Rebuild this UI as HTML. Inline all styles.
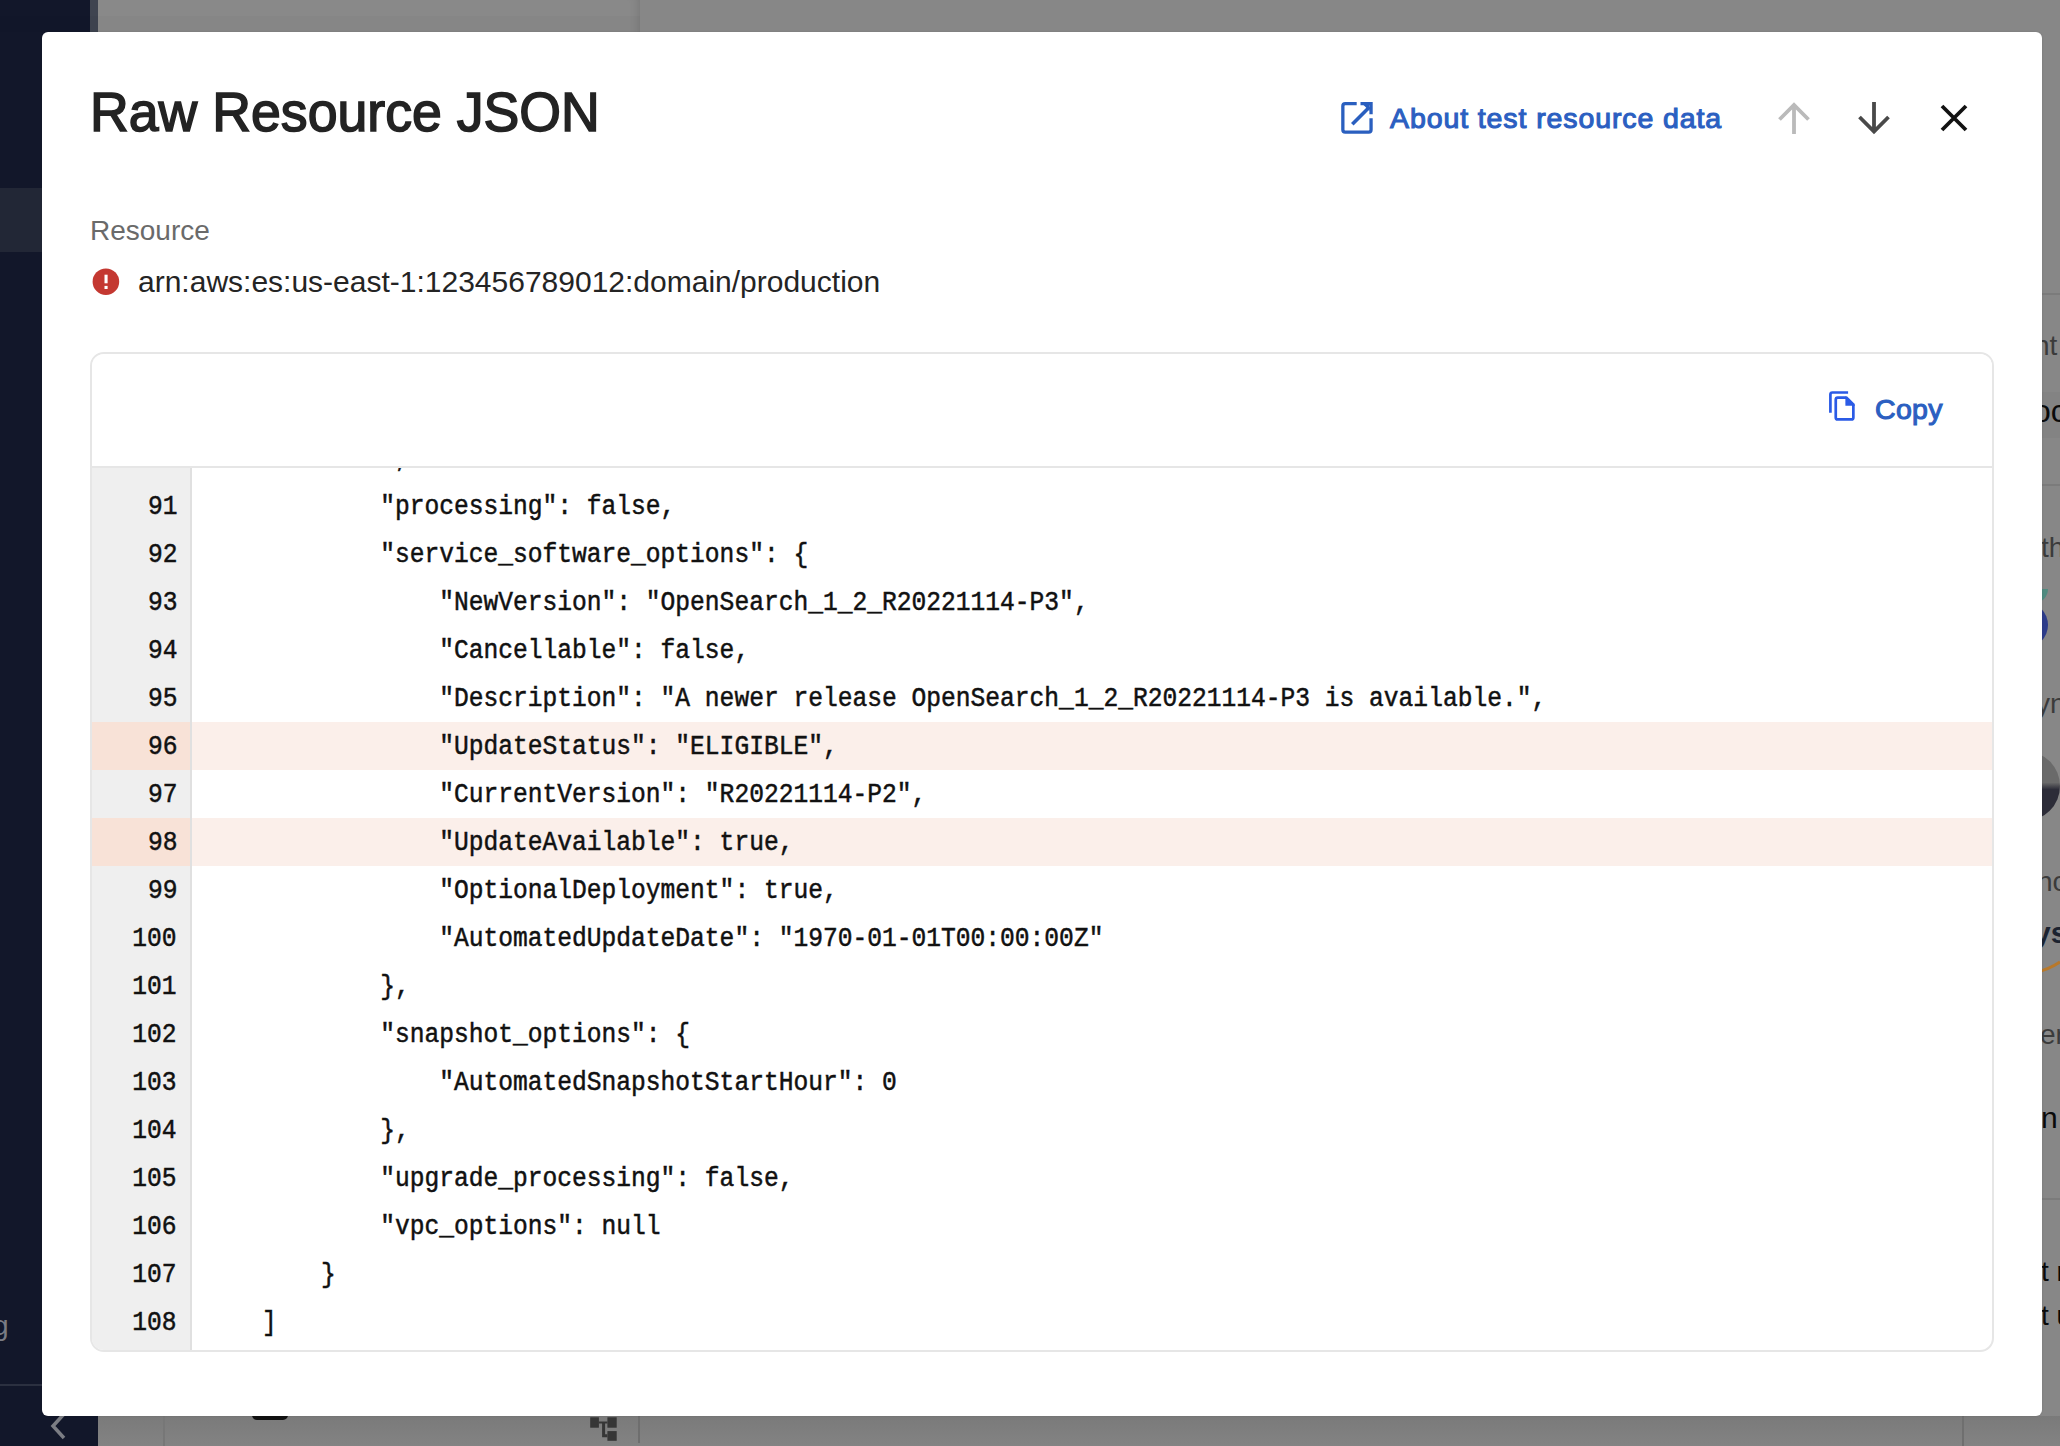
<!DOCTYPE html>
<html><head><meta charset="utf-8">
<style>
html,body{margin:0;padding:0;}
body{width:2060px;height:1446px;overflow:hidden;position:relative;background:#878787;font-family:"Liberation Sans",sans-serif;}
.abs{position:absolute;}
#side{left:0;top:0;width:98px;height:1446px;background:#12172a;}
#sidestrip{left:90px;top:0;width:8px;height:40px;background:#3f4450;}
#sidehi{left:0;top:188px;width:90px;height:64px;background:#222736;}
#sideline{left:0;top:1384px;width:98px;height:2px;background:#2b3040;}
#leftpanel{left:98px;top:0;width:542px;height:1446px;background:#898989;box-shadow:inset -10px 0 10px -8px rgba(0,0,0,0.12);}
#modal{left:42px;top:32px;width:2000px;height:1384px;background:#fff;border-radius:6px;box-shadow:0 0 2px rgba(0,0,0,0.15);}
#title{left:90px;top:79px;font-size:56px;font-weight:400;color:#232323;white-space:pre;transform:scaleX(0.958);transform-origin:0 0;-webkit-text-stroke:1.6px #232323;}
#about{left:1390px;top:102px;font-size:28.5px;font-weight:400;color:#2b5fc1;white-space:pre;letter-spacing:0.9px;-webkit-text-stroke:1.1px #2b5fc1;}
#reslabel{left:90px;top:215px;font-size:28px;color:#6a6a6a;white-space:pre;}
#arn{left:138px;top:265px;font-size:30px;color:#242424;white-space:pre;}
#box{left:90px;top:352px;width:1900px;height:996px;border:2px solid #e6e6e6;border-radius:14px;overflow:hidden;background:#fff;}
#boxhead{left:0;top:0;width:1900px;height:112px;border-bottom:2px solid #e6e6e6;background:#fff;z-index:2;}
#copy{left:1783px;top:39px;font-size:28.5px;font-weight:400;color:#2b5fc1;white-space:pre;letter-spacing:0.3px;-webkit-text-stroke:1.1px #2b5fc1;}
#code{left:0;top:80px;width:1900px;}
.row{position:relative;height:48px;}
.ln{position:absolute;left:0;top:0;width:98px;height:48px;background:#efefef;border-right:2px solid #e0e0e0;}
.ln span{position:absolute;right:13px;top:1px;line-height:48px;font-family:"Liberation Mono",monospace;font-size:27px;color:#111;transform:scaleX(0.911);transform-origin:100% 0;-webkit-text-stroke:0.5px #111;}
.tx{position:absolute;left:110.5px;top:1px;line-height:48px;font-family:"Liberation Mono",monospace;font-size:27px;color:#111;white-space:pre;transform:scaleX(0.911);transform-origin:0 0;-webkit-text-stroke:0.5px #111;}
.hl{background:#fbefea;}
.hl .ln{background:#f8e2d7;}
#gutterfill{left:0;top:0;width:98px;height:1000px;background:#efefef;border-right:2px solid #e0e0e0;}
</style></head><body>
<div id="side" class="abs"></div>
<div id="sidehi" class="abs"></div>
<div id="sidestrip" class="abs"></div>
<div id="sideline" class="abs"></div>
<div class="abs" style="left:-7px;top:1310px;font-size:28px;color:#7a7c84;">g</div>
<svg class="abs" style="left:44px;top:1410px" width="30" height="36"><path d="M20 4 L9 16 L20 28" stroke="#7b7d84" stroke-width="3.5" fill="none"/></svg>
<div id="leftpanel" class="abs"></div>
<div class="abs" style="left:0;top:16px;width:640px;height:16px;background:rgba(0,0,0,0.02)"></div>
<div class="abs" style="left:98px;top:1416px;width:1962px;height:30px;background:linear-gradient(#7a7a7a,#838383)"></div>
<div class="abs" style="left:163px;top:1416px;width:2px;height:30px;background:#777"></div>
<div class="abs" style="left:252px;top:1410px;width:36px;height:10px;background:#111;border-radius:0 0 5px 5px"></div>
<svg class="abs" style="left:580px;top:1410px" width="40" height="36"><rect x="10.2" y="7.3" width="8.7" height="10.4" fill="#363636"/><rect x="27.4" y="7.3" width="9.3" height="10.4" fill="#363636"/><rect x="27.4" y="21.1" width="9.3" height="9.7" fill="#363636"/><path d="M18.9 12.5 H27.4" stroke="#363636" stroke-width="2"/><path d="M23.6 12.5 V25.8 H27.4" stroke="#363636" stroke-width="3" fill="none"/></svg>
<div class="abs" style="left:638px;top:1416px;width:2px;height:27px;background:#6e6e6e"></div>
<div class="abs" style="left:1962px;top:1416px;width:2px;height:30px;background:#6f6f6f"></div>
<div class="abs" style="left:2042px;top:293px;width:18px;height:2px;background:#7b7b7b"></div>
<div class="abs" style="left:2034px;top:330px;font-size:28px;color:#3b3b3b;white-space:pre">nt</div>
<div class="abs" style="left:2042px;top:392px;width:18px;height:46px;background:#838383"></div>
<div class="abs" style="left:2033px;top:393px;font-size:32px;color:#0a0a0a;white-space:pre">oc</div>
<div class="abs" style="left:2042px;top:484px;width:18px;height:2px;background:#7b7b7b"></div>
<div class="abs" style="left:2041px;top:532px;font-size:28px;color:#3b3b3b;white-space:pre">th</div>
<div class="abs" style="left:2020px;top:589px;width:28px;height:14px;border-radius:0 0 14px 14px;background:#4f8a7f"></div>
<div class="abs" style="left:2016px;top:602px;width:32px;height:46px;border-radius:0 23px 23px 0;background:#2d3c8a"></div>
<div class="abs" style="left:2036px;top:688px;font-size:28px;color:#3b3b3b;white-space:pre">yn</div>
<div class="abs" style="left:1990px;top:751px;width:70px;height:70px;border-radius:35px;background:linear-gradient(#6a6a6a 45%,#2c2c38 55%)"></div>
<div class="abs" style="left:2037px;top:866px;font-size:28px;color:#3b3b3b;white-space:pre">nc</div>
<div class="abs" style="left:2034px;top:916px;font-size:30px;font-weight:700;color:#1c2330;white-space:pre">ys</div>
<svg class="abs" style="left:2036px;top:958px" width="24" height="20"><path d="M0 14 Q12 12 24 4" stroke="#b8782a" stroke-width="3" fill="none"/></svg>
<div class="abs" style="left:2040px;top:1019px;font-size:28px;color:#3b3b3b;white-space:pre">er</div>
<div class="abs" style="left:2041px;top:1101px;font-size:30px;color:#0a0a0a;white-space:pre">n</div>
<div class="abs" style="left:2042px;top:1198px;width:18px;height:2px;background:#7b7b7b"></div>
<div class="abs" style="left:2041px;top:1256px;font-size:28px;color:#0a0a0a;white-space:pre">t r</div>
<div class="abs" style="left:2041px;top:1300px;font-size:28px;color:#0a0a0a;white-space:pre">t u</div>
<div id="modal" class="abs"></div>
<div id="title" class="abs">Raw Resource JSON</div>
<div id="about" class="abs">About test resource data</div>
<div id="reslabel" class="abs">Resource</div>
<div id="arn" class="abs">arn:aws:es:us-east-1:123456789012:domain/production</div>

<div id="box" class="abs">
  <div id="gutterfill" class="abs"></div>
  <div id="code" class="abs">
    <div class="row"><div class="ln"><span>90</span></div><div class="tx">             ,</div></div>
    <div class="row"><div class="ln"><span>91</span></div><div class="tx">            "processing": false,</div></div>
    <div class="row"><div class="ln"><span>92</span></div><div class="tx">            "service_software_options": {</div></div>
    <div class="row"><div class="ln"><span>93</span></div><div class="tx">                "NewVersion": "OpenSearch_1_2_R20221114-P3",</div></div>
    <div class="row"><div class="ln"><span>94</span></div><div class="tx">                "Cancellable": false,</div></div>
    <div class="row"><div class="ln"><span>95</span></div><div class="tx">                "Description": "A newer release OpenSearch_1_2_R20221114-P3 is available.",</div></div>
    <div class="row hl"><div class="ln"><span>96</span></div><div class="tx">                "UpdateStatus": "ELIGIBLE",</div></div>
    <div class="row"><div class="ln"><span>97</span></div><div class="tx">                "CurrentVersion": "R20221114-P2",</div></div>
    <div class="row hl"><div class="ln"><span>98</span></div><div class="tx">                "UpdateAvailable": true,</div></div>
    <div class="row"><div class="ln"><span>99</span></div><div class="tx">                "OptionalDeployment": true,</div></div>
    <div class="row"><div class="ln"><span>100</span></div><div class="tx">                "AutomatedUpdateDate": "1970-01-01T00:00:00Z"</div></div>
    <div class="row"><div class="ln"><span>101</span></div><div class="tx">            },</div></div>
    <div class="row"><div class="ln"><span>102</span></div><div class="tx">            "snapshot_options": {</div></div>
    <div class="row"><div class="ln"><span>103</span></div><div class="tx">                "AutomatedSnapshotStartHour": 0</div></div>
    <div class="row"><div class="ln"><span>104</span></div><div class="tx">            },</div></div>
    <div class="row"><div class="ln"><span>105</span></div><div class="tx">            "upgrade_processing": false,</div></div>
    <div class="row"><div class="ln"><span>106</span></div><div class="tx">            "vpc_options": null</div></div>
    <div class="row"><div class="ln"><span>107</span></div><div class="tx">        }</div></div>
    <div class="row"><div class="ln"><span>108</span></div><div class="tx">    ]</div></div>
  </div>
  <div id="boxhead" class="abs">
    <div id="copy" class="abs">Copy</div>
  </div>
</div>
<svg class="abs" style="left:0;top:0;z-index:5" width="2060" height="1446" viewBox="0 0 2060 1446" fill="none">
 <circle cx="105.9" cy="281.7" r="13.3" fill="#c43831"/>
 <rect x="104.5" y="274.7" width="3.1" height="8.6" fill="#fff"/>
 <rect x="104.5" y="285.9" width="3.1" height="3.1" fill="#fff"/>
 <g stroke="#2a5fbf" stroke-width="3.3">
  <path d="M1356.7 103.7 H1345.2 Q1342.85 103.7 1342.85 106 V129.7 Q1342.85 132.05 1345.2 132.05 H1368.7 Q1371.05 132.05 1371.05 129.7 V118.2"/>
  <path d="M1360.5 103.7 H1371.05 V114.3" stroke-linejoin="miter"/>
  <path d="M1352.3 124.3 L1369.5 107.1" stroke-width="3.6"/>
  <path d="M1363.5 105 L1369.5 105 L1369.5 111 Z" fill="#2a5fbf" stroke="none"/>
 </g>
 <g stroke-width="3.8">
  <path d="M1794 134 V105 M1779.5 119.5 L1794 105 L1808.5 119.5" stroke="#bababa"/>
  <path d="M1874 102 V131 M1859.5 117 L1874 131.5 L1888.5 117" stroke="#494949"/>
  <path d="M1942 106 L1966 130 M1966 106 L1942 130" stroke="#121212"/>
 </g>
 <g stroke="#2b5be6" stroke-width="2.7">
  <path d="M1830.4 412.7 V394.5 Q1830.4 392.5 1832.4 392.5 H1848.1"/>
  <path d="M1853.35 405 V417.4 Q1853.35 419.4 1851.35 419.4 H1837.75 Q1835.75 419.4 1835.75 417.4 V399.7 Q1835.75 397.7 1837.75 397.7 H1846.5"/>
 </g>
 <path d="M1845.4 396.4 H1847.2 L1854.8 404 V405.8 H1845.4 Z" fill="#2b5be6"/>
</svg>
</body></html>
